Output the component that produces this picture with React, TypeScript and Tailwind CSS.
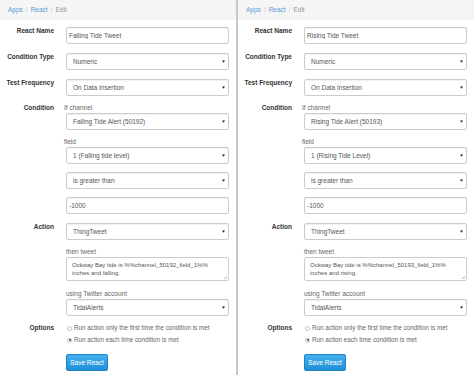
import * as React from "react"

type Panel = {
  name: string
  channel: string
  field: string
  tweet: [string, string]
}

const panels: Panel[] = [
  {
    name: "Falling Tide Tweet",
    channel: "Falling Tide Alert (50192)",
    field: "1 (Falling tide level)",
    tweet: ["Ockway Bay tide is %%channel_50192_field_1%%", "inches and falling."],
  },
  {
    name: "Rising Tide Tweet",
    channel: "Rising Tide Alert (50193)",
    field: "1 (Rising Tide Level)",
    tweet: ["Ockway Bay tide is %%channel_50193_field_1%%", "inches and rising."],
  },
]

const boxCls =
  "block h-[17px] w-full rounded-[2px] border border-[#cccccc] bg-white shadow-[inset_0_1px_1px_rgba(0,0,0,0.06)] text-[6.5px] text-[#555] leading-[15px]"

function TextBox({ value }: { value: string }) {
  return <input readOnly defaultValue={value} className={`${boxCls} px-[2px] outline-none`} />
}

function Select({ value }: { value: string }) {
  return (
    <div className={`${boxCls} flex items-center justify-between pl-[6px] pr-[3px]`}>
      <span>{value}</span>
      <svg width="3" height="3" viewBox="0 0 3 3">
        <polygon points="0,0.5 3,0.5 1.5,2.7" fill="#222" />
      </svg>
    </div>
  )
}

function Help({ children, className }: { children: React.ReactNode; className?: string }) {
  return (
    <div className={`mb-px h-[8px] text-[6.5px] leading-[8px] text-[#666] ${className ?? ""}`}>
      {children}
    </div>
  )
}

function Row({
  label,
  className,
  children,
}: {
  label: string
  className?: string
  children: React.ReactNode
}) {
  return (
    <div className={`grid shrink-0 grid-cols-[54px_163px] gap-x-[12px] ${className ?? ""}`}>
      <div className="text-right text-[6.5px] font-bold leading-[8px] text-[#333]">{label}</div>
      <div className="flex flex-col">{children}</div>
    </div>
  )
}

function Radio({ checked, label }: { checked?: boolean; label: string }) {
  return (
    <div className="flex h-[12px] items-center gap-[2px] pl-px text-[6.3px] text-[#666]">
      <span className="flex h-[5px] w-[5px] shrink-0 items-center justify-center rounded-full border border-[#c0c0c0] bg-white">
        {checked && <span className="h-[2px] w-[2px] rounded-full bg-[#444]" />}
      </span>
      <span>{label}</span>
    </div>
  )
}

function EditPanel({ p }: { p: Panel }) {
  return (
    <div className="flex w-[236px] flex-col">
      <div className="flex h-[20px] shrink-0 items-center gap-[3px] bg-[#f5f5f5] pl-[8px] text-[6.5px]">
        <span className="text-[#5a9bd5]">Apps</span>
        <span className="text-[#ccc]">/</span>
        <span className="text-[#5a9bd5]">React</span>
        <span className="text-[#ccc]">/</span>
        <span className="text-[#999]">Edit</span>
      </div>

      <Row label="React Name" className="mt-[7px]">
        <TextBox value={p.name} />
      </Row>
      <Row label="Condition Type" className="mt-[9px]">
        <Select value="Numeric" />
      </Row>
      <Row label="Test Frequency" className="mt-[9px]">
        <Select value="On Data Insertion" />
      </Row>

      <Row label="Condition" className="mt-[8px]">
        <Help className="-ml-[2px]">If channel</Help>
        <Select value={p.channel} />
        <Help className="-ml-[2px] mt-[8px]">field</Help>
        <Select value={p.field} />
        <div className="mt-[8px]">
          <Select value="is greater than" />
        </div>
        <div className="mt-[8px]">
          <TextBox value="-1000" />
        </div>
      </Row>

      <Row label="Action" className="mt-[9px]">
        <Select value="ThingTweet" />
        <Help className="mt-[8px]">then tweet</Help>
        <div className="relative h-[24px] rounded-[2px] border border-[#cccccc] bg-white pl-[5px] pt-[3px] text-[6px] leading-[8px] whitespace-pre text-[#555]">
          <div>{p.tweet[0]}</div>
          <div>{p.tweet[1]}</div>
          <svg className="absolute bottom-px right-px" width="4" height="4" viewBox="0 0 4 4">
            <path d="M4 1L1 4M4 2.5L2.5 4" stroke="#999" strokeWidth="0.6" />
          </svg>
        </div>
        <Help className="mt-[9px]">using Twitter account</Help>
        <Select value="TidalAlerts" />
      </Row>

      <Row label="Options" className="mt-[6px] [&>div:first-child]:pt-[2px]">
        <Radio label="Run action only the first time the condition is met" />
        <Radio checked label="Run action each time condition is met" />
        <button className="mt-[8px] block h-[17px] w-[42px] rounded-[2px] border border-[#1c84c6] bg-gradient-to-b from-[#45b0ee] to-[#1f90d8] text-[6.5px] leading-[15px] text-white">
          Save React
        </button>
      </Row>
    </div>
  )
}

export default function App() {
  return (
    <div className="flex h-[375px] w-[474px] overflow-hidden bg-white font-['Liberation_Sans',Arial,sans-serif]">
      <EditPanel p={panels[0]} />
      <div className="w-[2px] bg-[#c8c8c8]" />
      <EditPanel p={panels[1]} />
    </div>
  )
}
